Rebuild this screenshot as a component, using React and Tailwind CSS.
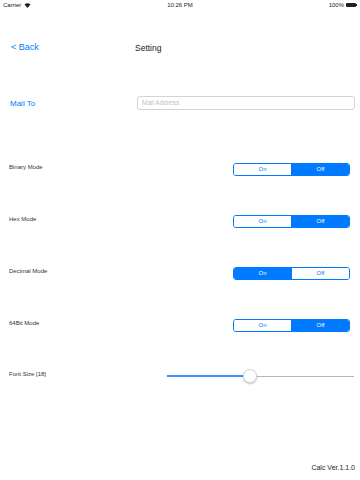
import React from "react";

function Seg({ on }) {
  return (
    <div className="flex w-[117px] h-[13px] rounded-[3px] border border-[#007aff] overflow-hidden text-[6px]">
      <div className={"flex-1 flex items-center justify-center " + (on ? "bg-[#007aff] text-white" : "bg-white text-[#007aff]")}>On</div>
      <div className={"flex-1 flex items-center justify-center border-l border-[#007aff] " + (on ? "bg-white text-[#007aff]" : "bg-[#007aff] text-white")}>Off</div>
    </div>
  );
}

function Row({ label, on, mt }) {
  return (
    <div className={"flex items-start justify-between pl-[9px] pr-[10px] " + mt}>
      <div className="text-[6px] leading-[8px] text-[#333]">{label}</div>
      <Seg on={on} />
    </div>
  );
}

export default function App() {
  return (
    <div className="w-[360px] h-[480px] bg-white flex flex-col text-black" style={{ fontFamily: '"Liberation Sans", Arial, sans-serif' }}>
      <div className="grid grid-cols-3 items-center h-[10px] px-[3px] text-[6px] leading-[10px] text-[#222]">
        <div className="flex items-center gap-[3px]">
          <span>Carrier</span>
          <svg width="7" height="5" viewBox="0 0 14 10">
            <path d="M7 10 L1 3 A9 9 0 0 1 13 3 Z" fill="#222" />
          </svg>
        </div>
        <div className="text-center">10:26 PM</div>
        <div className="flex items-center justify-end gap-[2px]">
          <span>100%</span>
          <div className="flex items-center">
            <div className="w-[10px] h-[4px] bg-[#222] rounded-[1px]" />
            <div className="w-[1px] h-[2px] bg-[#222]" />
          </div>
        </div>
      </div>

      <div className="flex items-center h-[20px] mt-[28px] text-[9px]">
        <div className="pl-[11px] text-[#007aff] w-[135px]">&lt; Back</div>
        <div className="text-[#222] text-[8.5px] mt-[1px]">Setting</div>
      </div>

      <div className="flex items-center mt-[38px] pl-[10px] pr-[5px]">
        <div className="w-[127px] text-[8px] text-[#007aff] mt-[1px]">Mail To</div>
        <div className="flex-1 h-[14px] border border-[#d4d4d4] rounded-[3px] flex items-center pl-[4px] text-[6.5px] text-[#c2c2c2]">Mail Address</div>
      </div>

      <Row label="Binary Mode" on={false} mt="mt-[53px]" />
      <Row label="Hex Mode" on={false} mt="mt-[39px]" />
      <Row label="Decimal Mode" on={true} mt="mt-[39px]" />
      <Row label="64Bit Mode" on={false} mt="mt-[39px]" />

      <div className="flex items-start mt-[38px] pl-[9px] pr-[6px]">
        <div className="w-[158px] text-[6px] leading-[8px] text-[#333]">Font Size [18]</div>
        <div className="flex-1 relative h-[14px] flex items-center mt-[-1px]">
          <div className="h-[2px] w-[77px] bg-[#3d8eff]" />
          <div className="h-[1px] flex-1 bg-[#b7b7b7]" />
          <div className="absolute left-[76px] top-[0px] w-[14px] h-[14px] rounded-full bg-white border border-[#d8d8d8] shadow-[0_1px_2px_rgba(0,0,0,0.25)]" />
        </div>
      </div>

      <div className="flex-1" />
      <div className="flex justify-end pr-[5px] pb-[7px] text-[7px] text-[#222]">Calc Ver.1.1.0</div>
    </div>
  );
}
